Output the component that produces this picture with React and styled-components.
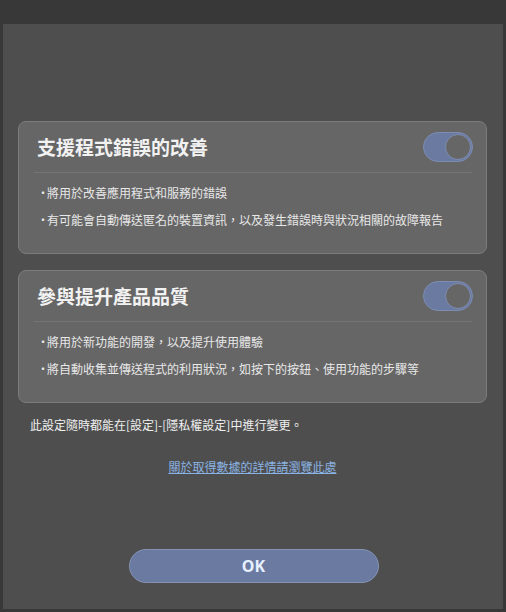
import React from "react";
import styled, { createGlobalStyle } from "styled-components";

const GlobalStyle = createGlobalStyle`
  html, body {
    margin: 0;
    padding: 0;
    background: #383838;
    font-family: "Noto Sans CJK TC", "Noto Sans", sans-serif;
  }
`;

const Screen = styled.div`
  width: 506px;
  height: 612px;
  padding: 24px 3px 3px;
  box-sizing: border-box;
  background: #383838;
`;

const Panel = styled.div`
  height: 100%;
  background: #4e4e4e;
  display: flex;
  flex-direction: column;
  padding: 97px 16px 26px 15px;
  box-sizing: border-box;
`;

const Card = styled.section`
  background: #666666;
  border: 1px solid #7c7c7c;
  border-radius: 8px;
  padding: 0 14px 20px 15px;
  margin-bottom: 16px;
  &:last-of-type {
    margin-bottom: 0;
  }
`;

const CardHeader = styled.div`
  height: 50px;
  display: flex;
  align-items: center;
  justify-content: space-between;
  padding-left: 3px;
  border-bottom: 1px solid #747474;
`;

const Title = styled.h2`
  margin: 0 0 1px;
  font-size: 19px;
  font-weight: 700;
  color: #f2f2f2;
  letter-spacing: 0;
`;

const Toggle = styled.div`
  position: relative;
  width: 50px;
  height: 30px;
  box-sizing: border-box;
  border-radius: 15px;
  background: #6a7aa0;
  border: 1px solid #7d8cb2;
  margin-right: -1px;
`;

const Knob = styled.span`
  position: absolute;
  top: 1px;
  right: 1px;
  width: 26px;
  height: 26px;
  box-sizing: border-box;
  border-radius: 50%;
  background: #666666;
  border: 1px solid #7d8cb2;
`;

const BulletList = styled.ul`
  list-style: none;
  margin: 0;
  padding: 6px 0 0 3px;
`;

const Bullet = styled.li`
  font-size: 12px;
  line-height: 27px;
  color: #e8e8e8;
  &::before {
    content: "・";
    display: inline-block;
    width: 10px;
  }
`;

const Note = styled.p`
  margin: 13px 0 0 12px;
  font-size: 12px;
  line-height: 18px;
  color: #f0f0f0;
`;

const MoreLink = styled.a`
  align-self: center;
  margin-top: 24px;
  font-size: 12px;
  line-height: 18px;
  color: #8ab2e2;
  text-decoration: underline;
  cursor: pointer;
`;

const OkButton = styled.button`
  align-self: center;
  margin-top: auto;
  margin-left: 2px;
  width: 250px;
  height: 34px;
  border-radius: 17px;
  border: 1px solid #8492b4;
  background: #6a7aa0;
  color: #e6f0ff;
  font-family: "Noto Sans", sans-serif;
  font-size: 16px;
  font-weight: 700;
  cursor: pointer;
`;

const sections = [
  {
    title: "支援程式錯誤的改善",
    items: [
      "將用於改善應用程式和服務的錯誤",
      "有可能會自動傳送匿名的裝置資訊，以及發生錯誤時與狀況相關的故障報告",
    ],
  },
  {
    title: "參與提升產品品質",
    items: [
      "將用於新功能的開發，以及提升使用體驗",
      "將自動收集並傳送程式的利用狀況，如按下的按鈕、使用功能的步驟等",
    ],
  },
];

function App() {
  return (
    <>
      <GlobalStyle />
      <Screen>
        <Panel>
          {sections.map((s) => (
            <Card key={s.title}>
              <CardHeader>
                <Title>{s.title}</Title>
                <Toggle>
                  <Knob />
                </Toggle>
              </CardHeader>
              <BulletList>
                {s.items.map((t) => (
                  <Bullet key={t}>{t}</Bullet>
                ))}
              </BulletList>
            </Card>
          ))}
          <Note>此設定隨時都能在[設定]-[隱私權設定]中進行變更。</Note>
          <MoreLink>關於取得數據的詳情請瀏覽此處</MoreLink>
          <OkButton type="button">OK</OkButton>
        </Panel>
      </Screen>
    </>
  );
}

export default App;
